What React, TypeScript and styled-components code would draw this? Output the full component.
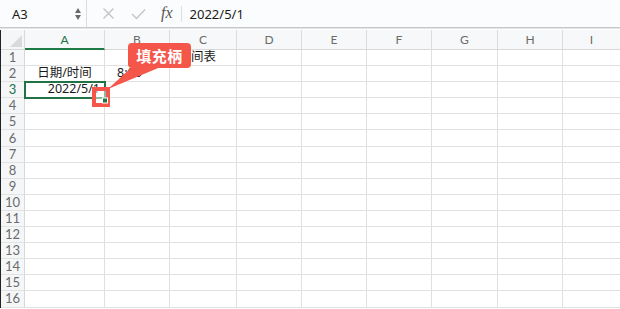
import React from 'react';
import styled, { createGlobalStyle } from 'styled-components';

const GlobalStyle = createGlobalStyle`
  html, body {
    margin: 0;
    padding: 0;
    background: #ffffff;
    font-family: 'Noto Sans', 'Noto Sans CJK SC', sans-serif;
  }
`;

const COLS = [
  { key: 'A', width: 80 },
  { key: 'B', width: 65 },
  { key: 'C', width: 67 },
  { key: 'D', width: 65 },
  { key: 'E', width: 65 },
  { key: 'F', width: 65 },
  { key: 'G', width: 66 },
  { key: 'H', width: 65 },
  { key: 'I', width: 58 },
];

const ROW_COUNT = 16;
const template = `24px ${COLS.map((c) => c.width + 'px').join(' ')}`;

const Frame = styled.div`
  width: 620px;
  height: 309px;
  overflow: hidden;
  position: relative;
  background: #fff;
`;

const FormulaBar = styled.div`
  height: 27px;
  display: flex;
  align-items: center;
  background: #fbfcfd;
  border-bottom: 1px solid #c9c9c9;
  box-shadow: 0 1px 0 #e4e4e4;
`;

const NameBox = styled.div`
  width: 87px;
  height: 100%;
  box-sizing: border-box;
  display: flex;
  align-items: center;
  justify-content: space-between;
  padding: 0 5px 0 12px;
  border-right: 1px solid #dcdcdc;
  font-size: 13px;
  color: #1a1a1a;
`;

const Spinner = styled.div`
  display: flex;
  flex-direction: column;
  gap: 2px;
  align-items: center;
`;

const Tri = styled.span<{ $down?: boolean }>`
  width: 0;
  height: 0;
  border-left: 3.5px solid transparent;
  border-right: 3.5px solid transparent;
  ${({ $down }) => ($down ? 'border-top: 5px solid #6a6a6a;' : 'border-bottom: 5px solid #6a6a6a;')}
`;

const IconSlot = styled.div`
  width: 30px;
  display: flex;
  justify-content: center;
  align-items: center;
`;

const Fx = styled.span`
  font-family: 'Liberation Serif', 'DejaVu Serif', serif;
  font-style: italic;
  font-size: 16px;
  color: #555;
  padding: 0 8px 2px 8px;
  border-right: 1px solid #dedede;
  line-height: 14px;
`;

const FormulaText = styled.div`
  padding-left: 8px;
  font-size: 13px;
  color: #1a1a1a;
`;

const Sheet = styled.div`
  margin-top: 2px;
  border-left: 1.5px solid #222;
  position: relative;
`;

const Row = styled.div<{ $head?: boolean }>`
  display: grid;
  grid-template-columns: ${template};
  height: ${({ $head }) => ($head ? '20px' : '16.1px')};
`;

const Corner = styled.div`
  background: #f5f6f7;
  border-right: 1px solid #d8d8d8;
  border-bottom: 1px solid #d8d8d8;
  position: relative;
  &::after {
    content: '';
    position: absolute;
    right: 2px;
    bottom: 2px;
    border-left: 12px solid transparent;
    border-bottom: 12px solid #dadada;
  }
`;

const ColHead = styled.div<{ $active?: boolean }>`
  background: #f7f8f9;
  border-right: 1px solid #dcdcdc;
  border-bottom: ${({ $active }) => ($active ? '2px solid #1f7a45' : '1px solid #d8d8d8')};
  color: ${({ $active }) => ($active ? '#217346' : '#6b6b6b')};
  font-family: Lato, 'Noto Sans', sans-serif;
  font-size: 12px;
  display: flex;
  align-items: center;
  justify-content: center;
  box-sizing: border-box;
`;

const RowHead = styled.div<{ $active?: boolean }>`
  background: #f5f6f7;
  border-right: 1px solid #d8d8d8;
  border-bottom: 1px solid #e2e2e2;
  color: ${({ $active }) => ($active ? '#217346' : '#6b6b6b')};
  font-family: Lato, 'Noto Sans', sans-serif;
  font-size: 13px;
  line-height: 1;
  display: flex;
  align-items: center;
  justify-content: center;
  box-sizing: border-box;
`;

const Cell = styled.div<{ $align?: string; $selected?: boolean; $pad?: number }>`
  border-right: 1px solid #e0e0e0;
  border-bottom: 1px solid #e0e0e0;
  box-sizing: border-box;
  font-size: 12.5px;
  line-height: 1;
  color: #1a1a1a;
  display: flex;
  align-items: center;
  white-space: nowrap;
  overflow: visible;
  justify-content: ${({ $align }) => $align || 'flex-start'};
  padding: 0 ${({ $pad }) => $pad ?? 3}px;
  ${({ $selected }) => $selected && 'outline: 2px solid #217346; outline-offset: -1px; position: relative; z-index: 1;'}
`;

const Overlay = styled.svg`
  position: absolute;
  left: 0;
  top: 0;
  pointer-events: none;
  z-index: 3;
`;

const Callout = styled.div`
  position: absolute;
  left: 127px;
  top: 13px;
  width: 63px;
  height: 25px;
  border-radius: 4px;
  background: #f4564a;
  color: #fff;
  font-family: 'Noto Sans CJK SC', sans-serif;
  font-weight: 700;
  font-size: 15px;
  letter-spacing: 0.5px;
  display: flex;
  align-items: center;
  justify-content: center;
  z-index: 4;
`;

const cellContent: Record<string, { text: string; align?: string; pad?: number }> = {
  'A2': { text: '日期/时间', align: 'center' },
  'B2': { text: '8:00', pad: 12 },
  'C1': { text: '间表', pad: 21 },
  'A3': { text: '2022/5/1', align: 'flex-end', pad: 4 },
};

export default function App() {
  return (
    <Frame>
      <GlobalStyle />
      <FormulaBar>
        <NameBox>
          <span>A3</span>
          <Spinner>
            <Tri />
            <Tri $down />
          </Spinner>
        </NameBox>
        <IconSlot style={{ marginLeft: 6 }}>
          <svg width="13" height="13" viewBox="0 0 13 13">
            <path d="M1.5 1.5 L11.5 11.5 M11.5 1.5 L1.5 11.5" stroke="#c4c4c4" strokeWidth="1.4" fill="none" />
          </svg>
        </IconSlot>
        <IconSlot>
          <svg width="15" height="12" viewBox="0 0 15 12">
            <path d="M1 6 L5.5 10.5 L14 1.5" stroke="#c4c4c4" strokeWidth="1.4" fill="none" />
          </svg>
        </IconSlot>
        <Fx>fx</Fx>
        <FormulaText>2022/5/1</FormulaText>
      </FormulaBar>
      <Sheet>
        <Row $head>
          <Corner />
          {COLS.map((c) => (
            <ColHead key={c.key} $active={c.key === 'A'}>{c.key}</ColHead>
          ))}
        </Row>
        {Array.from({ length: ROW_COUNT }, (_, i) => {
          const r = i + 1;
          return (
            <Row key={r}>
              <RowHead $active={r === 3}>{r}</RowHead>
              {COLS.map((c) => {
                const content = cellContent[c.key + r];
                return (
                  <Cell
                    key={c.key}
                    $align={content?.align}
                    $pad={content?.pad}
                    $selected={c.key === 'A' && r === 3}
                  >
                    {content?.text}
                  </Cell>
                );
              })}
            </Row>
          );
        })}
        <Overlay width="620" height="280" viewBox="0 0 620 280">
          <path d="M132 36 L162 36 L107 59 Z" fill="#f4564a" />
          <rect x="93" y="59" width="14" height="16" fill="#fff" fillOpacity="0.5" stroke="#f4564a" strokeWidth="4" />
          <rect x="101.5" y="68" width="5" height="5" fill="#217346" stroke="#fff" strokeWidth="1" />
        </Overlay>
        <Callout>填充柄</Callout>
      </Sheet>
    </Frame>
  );
}
